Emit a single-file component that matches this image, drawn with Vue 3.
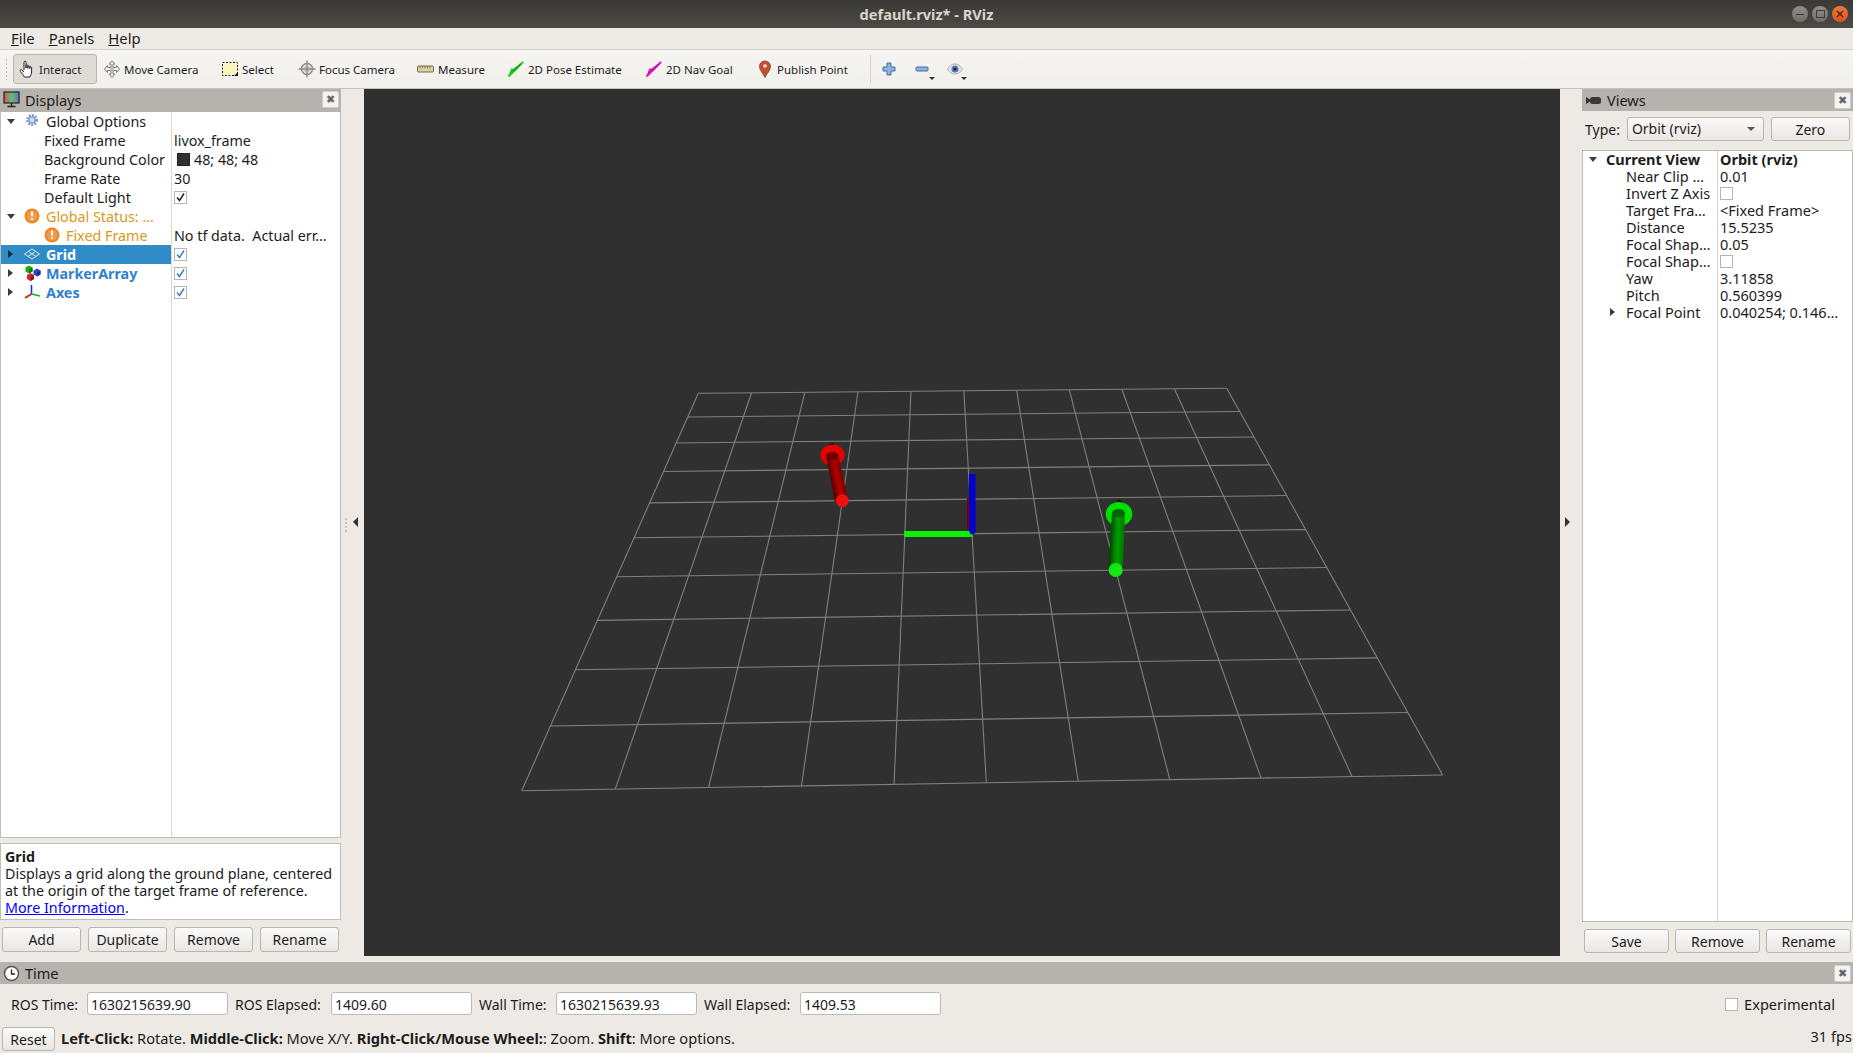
<template>
  <div class="window">
    <div class="titlebar">
      <span class="title-text">default.rviz* - RViz</span>
      <div class="win-btns">
        <span class="win-btn"><i class="glyph-min"></i></span>
        <span class="win-btn"><i class="glyph-max"></i></span>
        <span class="win-btn close"><svg width="8" height="8" viewBox="0 0 8 8"><path d="M1 1l6 6M7 1l-6 6" stroke="#4a2412" stroke-width="1.4"/></svg></span>
      </div>
    </div>

    <div class="menubar">
      <span><u>F</u>ile</span>
      <span><u>P</u>anels</span>
      <span><u>H</u>elp</span>
    </div>

    <div class="toolbar">
      <div class="grip"></div>
      <div
        v-for="tool in tools"
        :key="tool.name"
        class="tool"
        :class="{ active: tool.active }"
        :style="{ width: tool.width + 'px' }"
      >
        <svg class="tool-icon" width="18" height="18" viewBox="0 0 18 18">
          <template v-if="tool.icon === 'hand'">
            <path d="M6 10V2.200c0-1.500 2-1.500 2 0V8l0-2.200c0-1.100 1.900-1.100 1.900 0V8.300l0-1.700c0-1.100 1.900-1.100 1.900 0v2l0-1.100c0-1 1.800-1 1.800 0v4.500c0 2-1 3.500-1.800 5H6.500C5.500 15.500 3.800 13.500 2.500 11.500 1.500 10 3 9 4 10l2 2" fill="#fff" stroke="#222" stroke-width="1"/>
          </template>
          <template v-else-if="tool.icon === 'move'">
            <path d="M9 1l3 3h-2v3.500h3.500v-2l3 3.500-3 3.500v-2H10V14h2l-3 3.500L6 14h2v-3.500H4.500v2l-3-3.500 3-3.500v2H8V4H6z" fill="#f1f0ec" stroke="#7d7d7a" stroke-width="1"/>
            <circle cx="9" cy="9" r="2" fill="#bdbdb9"/>
          </template>
          <template v-else-if="tool.icon === 'select'">
            <rect x="1.500" y="2.500" width="15" height="13" fill="#fbf5bd" stroke="#222" stroke-dasharray="2 1.500"/>
            <path d="M13 16h4v-4z" fill="#111"/>
          </template>
          <template v-else-if="tool.icon === 'focus'">
            <circle cx="9" cy="9" r="5.500" fill="#e4e3df" stroke="#8a8a87" stroke-width="1.400"/>
            <path d="M9 .5v17M.5 9h17" stroke="#8a8a87" stroke-width="1.400"/>
            <circle cx="9" cy="9" r="2.500" fill="none" stroke="#a5a5a2"/>
          </template>
          <template v-else-if="tool.icon === 'ruler'">
            <rect x=".5" y="6" width="16" height="6" rx="1" fill="#dfd29c" stroke="#6f6a58"/>
            <path d="M3 6v2.500M5.500 6v2.500M8 6v2.500M10.500 6v2.500M13 6v2.500" stroke="#6f6a58" stroke-width=".8"/>
          </template>
          <template v-else-if="tool.icon === 'pose'">
            <path d="M1 17l5-6.500 1.500 1.500L17 1 6 9 4.500 8z" :fill="tool.color"/>
            <path d="M1.500 16.500L16 2" :stroke="tool.color" stroke-width="2.200"/>
            <path d="M3 13L14 4" stroke="#111" stroke-width=".4"/>
          </template>
          <template v-else-if="tool.icon === 'pin'">
            <path d="M9 17.500C7.500 13.500 3.500 10.500 3.500 6.500a5.500 5.500 0 0 1 11 0c0 4-4 7-5.500 11z" fill="#c9502f" stroke="#6e3a22" stroke-width=".8"/>
            <circle cx="9" cy="6" r="1.800" fill="#f4e0d2"/>
          </template>
        </svg>
        <span>{{ tool.name }}</span>
      </div>
      <div class="tool-sep"></div>
      <svg class="tb-icon" width="14" height="14" viewBox="0 0 14 14"><path d="M5 1h4v4h4v4H9v4H5V9H1V5h4z" fill="#8fb3dc" stroke="#3f6fa8"/></svg>
      <div class="tb-drop">
        <svg width="14" height="14" viewBox="0 0 14 14"><rect x="1" y="5" width="12" height="4" rx="1" fill="#8fb3dc" stroke="#3f6fa8"/></svg>
        <i class="drop-arrow"></i>
      </div>
      <div class="tb-drop">
        <svg width="16" height="14" viewBox="0 0 16 14"><path d="M.5 7C3 3 5.500 2 8 2s5 1 7.500 5C13 11 10.500 12 8 12S3 11 .5 7z" fill="#dfe3ea" stroke="#9aa0aa" stroke-width=".8"/><circle cx="8" cy="7" r="3.500" fill="#5a78b5"/><circle cx="8" cy="7" r="1.600" fill="#1b2440"/></svg>
        <i class="drop-arrow"></i>
      </div>
    </div>

    <div class="main">
      <div class="dock left-dock">
        <div class="dock-title displays-title">
          <svg width="17" height="17" viewBox="0 0 17 17">
            <defs>
              <linearGradient id="screen" x1="0" x2="1" y1="0" y2="0">
                <stop offset="0" stop-color="#d9555f"/><stop offset=".5" stop-color="#5fbf6a"/><stop offset="1" stop-color="#6a74cf"/>
              </linearGradient>
            </defs>
            <rect x="1" y="1" width="15" height="11" fill="url(#screen)" stroke="#222" stroke-width="1.200"/>
            <path d="M8.500 12v3M4.500 15.500h8" stroke="#222" stroke-width="1.400"/>
          </svg>
          <span>Displays</span>
          <span class="close-btn">✖</span>
        </div>

        <div class="tree display-tree">
          <div class="tree-col name-col">
            <div
              v-for="row in displayRows"
              :key="row.id"
              class="d-row"
              :class="[row.cls, { selected: row.selected }]"
            >
              <i v-if="row.arrow" class="arrow" :class="row.arrow"></i>
              <svg v-if="row.icon" class="row-icon" :class="{ nested: row.nested }" width="17" height="17" viewBox="0 0 17 17">
                <template v-if="row.icon === 'gear'">
                  <circle cx="8" cy="7" r="4.600" fill="none" stroke="#6f96cf" stroke-width="2.600" stroke-dasharray="1.800 1.200"/>
                  <circle cx="8" cy="7" r="3.200" fill="#cfdcf0" stroke="#5c86c4"/>
                </template>
                <template v-else-if="row.icon === 'warn'">
                  <circle cx="8" cy="8" r="7.500" fill="#ee8420"/>
                  <circle cx="8" cy="8" r="5.500" fill="#f29a4c"/>
                  <rect x="7" y="3.500" width="2" height="5" fill="#fff"/>
                  <rect x="7" y="10" width="2" height="2" fill="#fff"/>
                </template>
                <template v-else-if="row.icon === 'grid'">
                  <path d="M8 3l7.500 5L8 13 .5 8z" fill="none" stroke="#e4e9ee" stroke-width="1"/>
                  <path d="M4.500 5.500l7.500 5M11.500 5.500L4 10.500" stroke="#e4e9ee" stroke-width=".9"/>
                </template>
                <template v-else-if="row.icon === 'cubes'">
                  <path d="M5 .5l3.500 2v4L5 8.500l-3.500-2v-4z" fill="#12b012"/>
                  <path d="M5 4.500l3.500-2v4L5 8.500z" fill="#0a7a0a"/>
                  <path d="M13 3.500l3.500 2v4l-3.500 2-3.500-2v-4z" fill="#2c4cc8"/>
                  <path d="M13 7.500l3.500-2v4l-3.500 2z" fill="#1a2f8c"/>
                  <path d="M6.500 8l3.500 2v4l-3.500 2-3.500-2v-4z" fill="#d62430"/>
                  <path d="M6.500 12l3.500-2v4l-3.500 2z" fill="#96141c"/>
                </template>
                <template v-else-if="row.icon === 'axes'">
                  <path d="M7.500 10V1" stroke="#1a2bd0" stroke-width="1.500"/>
                  <path d="M7.500 10L1 14" stroke="#dd1616" stroke-width="1.700"/>
                  <path d="M7.500 10L16 12" stroke="#14b814" stroke-width="1.700"/>
                </template>
              </svg>
              <span class="d-label" :style="{ left: row.x + 'px' }">{{ row.label }}</span>
            </div>
          </div>
          <div class="tree-col value-col">
            <div v-for="row in displayRows" :key="row.id" class="d-row value">
              <template v-if="row.swatch"><i class="swatch"></i>{{ row.value }}</template>
              <span v-else-if="row.check" class="check">
                <svg width="11" height="11" viewBox="0 0 11 11"><path d="M2 5.500l2.500 3L9 1.500" fill="none" :stroke="row.check" stroke-width="1.500"/></svg>
              </span>
              <template v-else>{{ row.value }}</template>
            </div>
          </div>
        </div>

        <div class="h-grip"></div>

        <div class="description">
          <b>Grid</b><br />
          Displays a grid along the ground plane, centered<br />
          at the origin of the target frame of reference.<br />
          <a>More Information</a>.
        </div>

        <div class="button-row left-buttons">
          <button>Add</button>
          <button>Duplicate</button>
          <button>Remove</button>
          <button>Rename</button>
        </div>
      </div>

      <div class="splitter"><i class="grip-dots"></i><i class="tri-left"></i></div>

      <div class="viewport">
        <svg width="1196" height="867" viewBox="364 89 1196 867">
          <defs>
            <linearGradient id="redTube" gradientUnits="userSpaceOnUse" x1="831" y1="479.400" x2="843.400" y2="476.700">
              <stop offset="0" stop-color="#5a0000"/><stop offset=".5" stop-color="#b40000"/><stop offset="1" stop-color="#780000"/>
            </linearGradient>
            <linearGradient id="greenTube" gradientUnits="userSpaceOnUse" x1="1109" y1="541.500" x2="1124.500" y2="542">
              <stop offset="0" stop-color="#003c00"/><stop offset=".55" stop-color="#00a000"/><stop offset="1" stop-color="#007000"/>
            </linearGradient>
          </defs>
          <line v-for="(l, i) in gridLines" :key="i" :x1="l.x1" :y1="l.y1" :x2="l.x2" :y2="l.y2" class="grid-line" />

          <path d="M832 443l-3 2h6z" fill="#000"/>
          <ellipse cx="832.500" cy="455" rx="12" ry="10.500" fill="#e60000"/>
          <polygon points="826,456 838,454 848,500 835,502" fill="url(#redTube)"/>
          <ellipse cx="832" cy="456" rx="6" ry="4" fill="#6a0000"/>
          <circle cx="842.300" cy="500.700" r="6.500" fill="#f01010"/>

          <rect x="967" y="498" width="3" height="32" fill="#7a0000"/>
          <rect x="904" y="531" width="69" height="6" fill="#0cf000"/>
          <path d="M969 474h6.500v58l-2 3-3-1-1.500-3z" fill="#0000d0"/>

          <path d="M1119.500 500l-4 3h8z" fill="#000"/>
          <ellipse cx="1119" cy="514" rx="13.300" ry="12" fill="#00e000"/>
          <polygon points="1112,512 1125,512 1123,566 1108.500,566" fill="url(#greenTube)"/>
          <ellipse cx="1118.500" cy="513" rx="6.500" ry="4" fill="#006800"/>
          <circle cx="1115.700" cy="570" r="7" fill="#14e814"/>
        </svg>
      </div>

      <div class="splitter right"><i class="tri-right"></i></div>

      <div class="dock right-dock">
        <div class="dock-title views-title">
          <svg width="17" height="17" viewBox="0 0 17 17"><path d="M1 5l4 2.500V9.500L1 12z" fill="#333"/><rect x="5" y="5" width="11" height="7" rx="2.500" fill="#3a3a3a"/></svg>
          <span>Views</span>
          <span class="close-btn">✖</span>
        </div>
        <div class="type-row">
          <span>Type:</span>
          <div class="combo">Orbit (rviz)<i class="combo-arrow"></i></div>
          <button class="zero">Zero</button>
        </div>
        <div class="tree view-tree">
          <div class="tree-col view-names">
            <div v-for="row in viewRows" :key="row.label" class="v-row" :class="{ strong: row.strong }">
              <i v-if="row.arrow" class="arrow" :class="row.arrow"></i>
              {{ row.label }}
            </div>
          </div>
          <div class="tree-col view-values">
            <div v-for="row in viewRows" :key="row.label" class="v-row" :class="{ strong: row.strong }">
              <span v-if="row.box" class="check empty"></span>
              <template v-else>{{ row.value }}</template>
            </div>
          </div>
        </div>
        <div class="button-row right-buttons">
          <button>Save</button>
          <button>Remove</button>
          <button>Rename</button>
        </div>
      </div>
    </div>

    <div class="time-panel">
      <div class="dock-title time-title">
        <svg width="17" height="17" viewBox="0 0 17 17"><circle cx="8.500" cy="8.500" r="7" fill="#fff" stroke="#555" stroke-width="1.500"/><path d="M8.500 4.500v4.500H12" fill="none" stroke="#222" stroke-width="1.300"/></svg>
        <span>Time</span>
        <span class="close-btn">✖</span>
      </div>
      <div class="time-row">
        <template v-for="f in timeFields" :key="f.label">
          <label>{{ f.label }}</label>
          <div class="field">{{ f.value }}</div>
        </template>
        <div class="experimental"><span class="check empty"></span>Experimental</div>
      </div>
      <div class="status-row">
        <button class="reset">Reset</button>
        <span class="hint"><b>Left-Click:</b> Rotate. <b>Middle-Click:</b> Move X/Y. <b>Right-Click/Mouse Wheel:</b>: Zoom. <b>Shift</b>: More options.</span>
        <span class="fps">31 fps</span>
      </div>
    </div>
  </div>
</template>

<script setup>
const tools = [
  { name: "Interact", icon: "hand", width: 84, active: true },
  { name: "Move Camera", icon: "move", width: 118 },
  { name: "Select", icon: "select", width: 77 },
  { name: "Focus Camera", icon: "focus", width: 119 },
  { name: "Measure", icon: "ruler", width: 90 },
  { name: "2D Pose Estimate", icon: "pose", color: "#14d414", width: 138 },
  { name: "2D Nav Goal", icon: "pose", color: "#e814c8", width: 111 },
  { name: "Publish Point", icon: "pin", width: 108 },
];

const displayRows = [
  { id: 1, label: "Global Options", arrow: "down", icon: "gear", x: 46 },
  { id: 2, label: "Fixed Frame", x: 44, value: "livox_frame" },
  { id: 3, label: "Background Color", x: 44, value: "48; 48; 48", swatch: true },
  { id: 4, label: "Frame Rate", x: 44, value: "30" },
  { id: 5, label: "Default Light", x: 44, check: "#222" },
  { id: 6, label: "Global Status: …", arrow: "down", icon: "warn", x: 46, cls: "warn" },
  { id: 7, label: "Fixed Frame", icon: "warn", nested: true, x: 66, cls: "warn", value: "No tf data.  Actual err…" },
  { id: 8, label: "Grid", arrow: "right", icon: "grid", x: 46, cls: "plugin", selected: true, check: "#3b7cc4" },
  { id: 9, label: "MarkerArray", arrow: "right", icon: "cubes", x: 46, cls: "plugin", check: "#3b7cc4" },
  { id: 10, label: "Axes", arrow: "right", icon: "axes", x: 46, cls: "plugin", check: "#3b7cc4" },
];

const viewRows = [
  { label: "Current View", value: "Orbit (rviz)", arrow: "down", strong: true },
  { label: "Near Clip …", value: "0.01" },
  { label: "Invert Z Axis", box: true },
  { label: "Target Fra…", value: "<Fixed Frame>" },
  { label: "Distance", value: "15.5235" },
  { label: "Focal Shap… ", value: "0.05" },
  { label: "Focal Shap…", box: true },
  { label: "Yaw", value: "3.11858" },
  { label: "Pitch", value: "0.560399" },
  { label: "Focal Point", value: "0.040254; 0.146…", arrow: "right sub" },
];

const timeFields = [
  { label: "ROS Time:", value: "1630215639.90" },
  { label: "ROS Elapsed:", value: "1409.60" },
  { label: "Wall Time:", value: "1630215639.93" },
  { label: "Wall Elapsed:", value: "1409.53" },
];

// grid corners as seen on screen, the lines between them follow the perspective
function makeHomography(q) {
  const [p0, p1, p2, p3] = q;
  const dx1 = p1[0] - p2[0], dx2 = p3[0] - p2[0], sx = p0[0] - p1[0] + p2[0] - p3[0];
  const dy1 = p1[1] - p2[1], dy2 = p3[1] - p2[1], sy = p0[1] - p1[1] + p2[1] - p3[1];
  const den = dx1 * dy2 - dx2 * dy1;
  const g = (sx * dy2 - dx2 * sy) / den;
  const h = (dx1 * sy - sx * dy1) / den;
  return (u, v) => {
    const w = g * u + h * v + 1;
    return [
      ((p1[0] - p0[0] + g * p1[0]) * u + (p3[0] - p0[0] + h * p3[0]) * v + p0[0]) / w,
      ((p1[1] - p0[1] + g * p1[1]) * u + (p3[1] - p0[1] + h * p3[1]) * v + p0[1]) / w,
    ];
  };
}

const project = makeHomography([[698.3, 393.3], [1226.7, 388.3], [1442.7, 775], [521.7, 790.7]]);
const gridLines = [];
for (let i = 0; i <= 10; i++) {
  const t = i / 10;
  const a = project(t, 0), b = project(t, 1), c = project(0, t), d = project(1, t);
  gridLines.push({ x1: a[0], y1: a[1], x2: b[0], y2: b[1] });
  gridLines.push({ x1: c[0], y1: c[1], x2: d[0], y2: d[1] });
}
</script>

<style>
html, body {
  margin: 0;
  overflow: hidden;
  background: #edeae5;
}
</style>

<style scoped>
.window {
  width: 1853px;
  height: 1053px;
  display: flex;
  flex-direction: column;
  background: #edeae5;
  color: #1c1c1c;
  font-family: "Noto Sans", sans-serif;
  font-size: 14px;
  overflow: hidden;
}

.titlebar {
  height: 28px;
  flex: none;
  display: flex;
  align-items: center;
  justify-content: center;
  position: relative;
  background: linear-gradient(#3a3935, #4b4a45);
}
.title-text {
  color: #d9d5cc;
  font-weight: 700;
  font-size: 14.600px;
}
.win-btns {
  position: absolute;
  right: 5px;
  top: 6px;
  display: flex;
  gap: 4px;
}
.win-btn {
  width: 16px;
  height: 16px;
  border-radius: 50%;
  background: linear-gradient(#8f8e88, #6f6e69);
  display: flex;
  align-items: center;
  justify-content: center;
}
.win-btn.close {
  background: linear-gradient(#f0783f, #d9531f);
}
.glyph-min {
  width: 8px;
  height: 1px;
  background: #3d3c38;
}
.glyph-max {
  width: 7px;
  height: 6px;
  border: 1px solid #3d3c38;
}

.menubar {
  height: 21px;
  flex: none;
  box-sizing: border-box;
  display: flex;
  align-items: center;
  gap: 14px;
  padding: 0 0 2px 11px;
  background: #eeebe6;
  font-size: 14.800px;
}

.toolbar {
  height: 38px;
  flex: none;
  display: flex;
  align-items: center;
  padding-left: 5px;
  background: linear-gradient(#f6f5f1, #f1efeb);
  border-top: 1px solid #d6d3ce;
  border-bottom: 1px solid #c4c2bd;
  font-size: 11.500px;
  box-sizing: content-box;
}
.grip {
  width: 3px;
  height: 22px;
  margin-right: 5px;
  background-image: radial-gradient(#b9b7b2 40%, transparent 45%);
  background-size: 3px 4px;
}
.tool {
  height: 30px;
  box-sizing: border-box;
  display: flex;
  align-items: center;
  gap: 3px;
  padding-left: 6px;
  white-space: nowrap;
  flex: none;
}
.tool.active {
  background: #dfdcd8;
  border: 1px solid #b9b6b1;
  border-radius: 3px;
  padding-left: 4px;
}
.tool-icon {
  flex: none;
}
.tool-sep {
  width: 1px;
  height: 28px;
  background: #d6d3ce;
  margin: 0 11px 0 12px;
}
.tb-icon {
  margin-right: 19px;
}
.tb-drop {
  position: relative;
  width: 32px;
  height: 18px;
  display: flex;
  align-items: center;
}
.drop-arrow {
  position: absolute;
  left: 14px;
  bottom: -2px;
  border-left: 3px solid transparent;
  border-right: 3px solid transparent;
  border-top: 3px solid #333;
}

.main {
  flex: 1;
  min-height: 0;
  display: flex;
}
.dock {
  flex: none;
  display: flex;
  flex-direction: column;
}
.left-dock {
  width: 341px;
}
.right-dock {
  width: 271px;
}
.dock-title {
  height: 23px;
  flex: none;
  display: flex;
  align-items: center;
  gap: 5px;
  padding-left: 3px;
  background: #b6b2ae;
  font-size: 14.500px;
}
.displays-title {
  box-sizing: border-box;
  padding-bottom: 2px;
}
.views-title {
  height: 22px;
}
.close-btn {
  margin-left: auto;
  margin-right: 2px;
  width: 17px;
  height: 17px;
  box-sizing: border-box;
  border: 1px solid #d2cfcb;
  border-radius: 2px;
  background: #f4f3f1;
  color: #666;
  font-family: "DejaVu Sans", sans-serif;
  font-size: 11px;
  line-height: 15px;
  text-align: center;
}

.tree {
  flex: 1;
  min-height: 0;
  display: flex;
  background: #fff;
  border: 1px solid #bfbdb8;
  border-top: none;
}
.tree-col {
  display: flex;
  flex-direction: column;
}
.display-tree {
  font-size: 14.300px;
}
.name-col {
  width: 171px;
  flex: none;
  box-sizing: border-box;
  border-right: 1px solid #d8d7d4;
}
.value-col {
  flex: 1;
  min-width: 0;
  padding-left: 2px;
}
.d-row {
  height: 19px;
  flex: none;
  position: relative;
  line-height: 19px;
  white-space: pre;
}
.d-label {
  position: absolute;
  top: 0;
  margin-left: -1px;
}
.d-row.warn {
  color: #dc9722;
}
.d-row.plugin {
  color: #2f7fd1;
  font-weight: 700;
}
.d-row.selected {
  background: #308cc6;
  color: #fff;
}
.arrow {
  position: absolute;
  width: 0;
  height: 0;
}
.arrow.down {
  left: 6px;
  top: 7px;
  border-left: 4.500px solid transparent;
  border-right: 4.500px solid transparent;
  border-top: 5px solid #3c3c3c;
}
.arrow.right {
  left: 7px;
  top: 5px;
  border-top: 4.500px solid transparent;
  border-bottom: 4.500px solid transparent;
  border-left: 5px solid #3c3c3c;
}
.selected .arrow.right {
  border-left-color: #132c3d;
}
.row-icon {
  position: absolute;
  left: 23px;
  top: 1px;
}
.row-icon.nested {
  left: 43px;
}
.swatch {
  display: inline-block;
  width: 13px;
  height: 13px;
  box-sizing: border-box;
  margin: 0 4px 0 3px;
  vertical-align: -1px;
  background: #303030;
  border: 1px solid #222;
}
.check {
  display: inline-flex;
  align-items: center;
  justify-content: center;
  width: 13px;
  height: 13px;
  box-sizing: border-box;
  border: 1px solid #b7b5b0;
  background: #fff;
  vertical-align: top;
  margin-top: 3px;
}

.h-grip {
  height: 5px;
  flex: none;
}
.description {
  height: 77px;
  flex: none;
  box-sizing: border-box;
  padding: 4px 0 0 4px;
  background: #fff;
  border: 1px solid #bfbdb8;
  font-size: 14.300px;
  line-height: 17px;
  white-space: nowrap;
}
.description a {
  color: #0000ff;
  text-decoration: underline;
}

button {
  font: inherit;
  color: inherit;
  padding: 0;
  box-sizing: border-box;
  border: 1px solid #b9b6b1;
  border-radius: 3px;
  background: linear-gradient(#fbfafa, #e9e6e2);
}
.button-row {
  flex: none;
  display: flex;
}
.left-buttons {
  height: 25px;
  gap: 7px;
  margin: 7px 0 4px;
  padding: 0 2px;
}
.left-buttons button {
  width: 79px;
}
.right-buttons {
  height: 24px;
  gap: 6px;
  margin: 7px 0 3px;
  padding-left: 2px;
}
.right-buttons button {
  width: 85px;
}

.splitter {
  width: 23px;
  flex: none;
  position: relative;
}
.splitter.right {
  width: 22px;
}
.grip-dots {
  position: absolute;
  left: 4px;
  top: 428px;
  width: 2px;
  height: 16px;
  background-image: radial-gradient(#c6c4bf 50%, transparent 55%);
  background-size: 2px 4px;
}
.tri-left {
  position: absolute;
  left: 12px;
  top: 428px;
  border-top: 5px solid transparent;
  border-bottom: 5px solid transparent;
  border-right: 5px solid #333;
}
.tri-right {
  position: absolute;
  left: 5px;
  top: 428px;
  border-top: 5px solid transparent;
  border-bottom: 5px solid transparent;
  border-left: 5px solid #333;
}
.viewport {
  flex: 1;
  min-width: 0;
  background: #303030;
}
.viewport svg {
  display: block;
}
.grid-line {
  stroke: #808080;
  stroke-width: 1.100;
}

.type-row {
  height: 24px;
  flex: none;
  margin: 6px 0 9px;
  display: flex;
  align-items: center;
  padding-left: 3px;
}
.combo {
  width: 137px;
  height: 24px;
  margin-left: 7px;
  box-sizing: border-box;
  position: relative;
  padding-left: 4px;
  line-height: 21px;
  border: 1px solid #b9b6b1;
  border-radius: 3px;
  background: linear-gradient(#fbfafa, #e9e6e2);
}
.combo-arrow {
  position: absolute;
  right: 8px;
  top: 9px;
  border-left: 4px solid transparent;
  border-right: 4px solid transparent;
  border-top: 4px solid #555;
}
.zero {
  width: 79px;
  height: 24px;
  margin-left: 7px;
}
.view-tree {
  border-top: 1px solid #bfbdb8;
  font-size: 14.500px;
}
.view-names {
  width: 135px;
  flex: none;
  box-sizing: border-box;
  border-right: 1px solid #d8d7d4;
}
.view-values {
  flex: 1;
  min-width: 0;
  padding-left: 2px;
}
.v-row {
  height: 17px;
  flex: none;
  position: relative;
  line-height: 17px;
  padding-left: 43px;
  white-space: nowrap;
}
.view-values .v-row {
  padding-left: 0;
}
.view-values .check {
  margin-top: 2px;
}
.v-row.strong {
  font-weight: 700;
}
.view-names .v-row.strong {
  padding-left: 23px;
}
.v-row .arrow.down {
  left: 6px;
  top: 6px;
}
.v-row .arrow.sub {
  left: 27px;
  top: 4px;
}

.time-panel {
  height: 91px;
  flex: none;
  margin-top: 6px;
  display: flex;
  flex-direction: column;
}
.time-title {
  height: 22px;
}
.time-row {
  height: 23px;
  flex: none;
  margin-top: 8px;
  display: flex;
  align-items: center;
  padding-left: 11px;
}
.time-row label {
  width: 76px;
  flex: none;
  padding-top: 1px;
  box-sizing: border-box;
}
.time-row label:nth-of-type(2) {
  width: 96px;
}
.time-row label:nth-of-type(3) {
  width: 77px;
}
.time-row label:nth-of-type(4) {
  width: 96px;
}
.field {
  width: 141px;
  height: 23px;
  flex: none;
  margin-right: 7px;
  box-sizing: border-box;
  padding-left: 3px;
  line-height: 23px;
  background: #fff;
  border: 1px solid #bdbab5;
  border-radius: 3px;
}
.experimental {
  margin-left: auto;
  padding-right: 18px;
  display: flex;
  align-items: center;
  gap: 6px;
  font-size: 14.600px;
}
.experimental .check {
  margin: 1px 0 0;
}
.status-row {
  flex: 1;
  margin-top: 12px;
  display: flex;
  padding-left: 2px;
  position: relative;
}
.reset {
  width: 53px;
  height: 24px;
}
.hint {
  margin-left: 6px;
  line-height: 22px;
  font-size: 14.600px;
}
.fps {
  margin-left: auto;
  padding-right: 1px;
  line-height: 18px;
  font-size: 14.600px;
}
</style>
